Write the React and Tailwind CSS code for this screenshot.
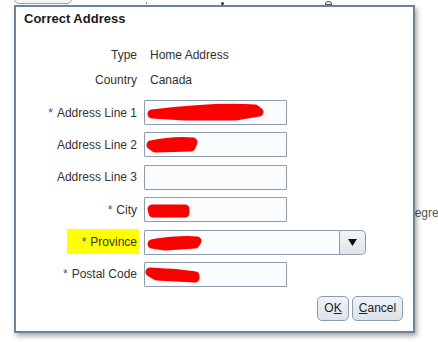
// Correct Address dialog

const font = { fontFamily: '"Liberation Sans", Arial, sans-serif' }

function Scribble({ d, w = 140 }) {
  return (
    <svg width={w} height="23" viewBox={`0 0 ${w} 23`} className="absolute left-0 top-0">
      <path d={d} stroke="#ff0000" strokeWidth="9" strokeLinecap="round" strokeLinejoin="round" fill="none" />
    </svg>
  )
}

function Label({ text, required, highlight }) {
  return (
    <div className="relative flex h-[25px] items-center justify-end text-[12px] text-[#333]">
      {highlight && <div className="absolute -top-[1px] right-[-2px] h-[25px] w-[72px] bg-[#ffff00]" />}
      <span className="relative whitespace-nowrap">
        {required && <span className="mr-[4px] text-[#2c5a88]">*</span>}
        {text}
      </span>
    </div>
  )
}

function TextBox({ scribble, w }) {
  return (
    <div className="relative h-[25px] w-[143px] rounded-[1px] border border-[#8d9dac] bg-[#fbfcfe]">
      {scribble && <Scribble d={scribble} w={w} />}
    </div>
  )
}

export default function App() {
  return (
    <div className="relative h-[342px] w-[438px] overflow-hidden bg-white" style={font}>
      {/* page behind the dialog */}
      <div className="absolute left-[14px] top-[-10px] h-[14px] w-[58px] rounded-b-[5px] border border-[#9aa5ae] bg-[#f3f4f5]" />
      <div className="absolute left-[146px] top-[2px] h-[2px] w-[1px] bg-[#7a8a9a]" />
      <div className="absolute left-[221px] top-[2px] h-[3px] w-[3px] rounded-full bg-[#333]" />
      <div className="absolute left-[325px] top-[1px] h-[4px] w-[7px] rounded-t-full border border-[#555]" />
      <div className="absolute left-[406px] top-[204px] text-[12px] text-[#555]">Degree</div>

      {/* dialog */}
      <div className="absolute left-[14px] top-[5px] h-[328px] w-[401px] border-2 border-[#6d8497] bg-white shadow-[2px_3px_5px_rgba(0,0,0,0.35)]">
        <div className="pl-[8px] pt-[4px] text-[13px] font-bold leading-[16px] text-[#1b1b1b]">Correct Address</div>

        <div className="mt-[15px] grid grid-cols-[121px_1fr] gap-x-[7px]">
          <Label text="Type" />
          <div className="flex h-[25px] items-center pl-[6px] text-[12px] text-[#2f2f2f]">Home Address</div>
          <Label text="Country" />
          <div className="flex h-[25px] items-center pl-[6px] text-[12px] text-[#2f2f2f]">Canada</div>
        </div>

        <div className="mt-[8px] grid grid-cols-[121px_1fr] gap-x-[7px] gap-y-[7.4px]">
          <Label text="Address Line 1" required />
          <TextBox scribble="M7 13 C40 9, 80 6, 110 8 L114 11 L90 15 L40 15 Z" w={125} />
          <Label text="Address Line 2" />
          <TextBox scribble="M6 12 C20 9, 38 8, 48 9 L46 14 L10 15 Z" w={60} />
          <Label text="Address Line 3" />
          <TextBox />
          <Label text="City" required />
          <TextBox scribble="M7 11 L40 11 L40 15 L8 15 Z" w={55} />
          <Label text="Province" required highlight />
          <div className="flex h-[25px] w-[222px]">
            <div className="relative h-full flex-1 rounded-l-[1px] border border-[#8d9dac] bg-[#fbfcfe]">
              <Scribble d="M7 13 C20 10, 40 9, 52 10 L50 13 L20 15 Z" w={65} />
            </div>
            <div className="flex h-full w-[26px] items-center justify-center rounded-r-[5px] border border-l-0 border-[#8d9dac] bg-gradient-to-b from-[#f3f5f7] to-[#e0e5ea]">
              <svg width="9" height="7" viewBox="0 0 9 7">
                <path d="M0 0 H9 L4.5 7 Z" fill="#111" />
              </svg>
            </div>
          </div>
          <Label text="Postal Code" required />
          <TextBox scribble="M5 9 C25 10, 40 11, 50 13 L50 15 L12 13 Z" w={60} />
        </div>

        <div className="mt-[9px] flex justify-end gap-[3px] pr-[10px]">
          <button className="h-[25px] w-[32px] rounded-[5px] border border-[#8d9dac] bg-gradient-to-b from-[#f0f3f6] to-[#dde3e9] text-[12px] text-[#222]">
            O<span className="underline">K</span>
          </button>
          <button className="h-[25px] w-[51px] rounded-[5px] border border-[#8d9dac] bg-gradient-to-b from-[#f0f3f6] to-[#dde3e9] text-[12px] text-[#222]">
            <span className="underline">C</span>ancel
          </button>
        </div>
      </div>
    </div>
  )
}
